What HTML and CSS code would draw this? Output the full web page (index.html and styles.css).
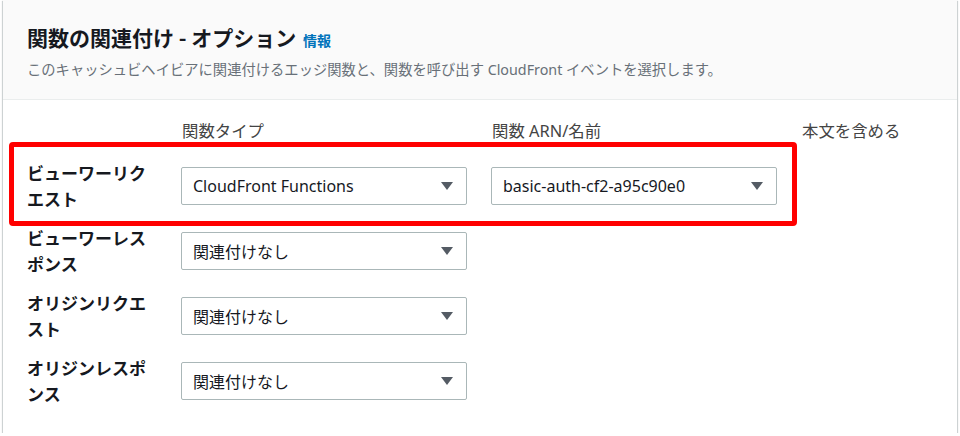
FILE: index.html
```html
<!DOCTYPE html>
<html>
  <head>
    <meta charset="utf-8">
    <title>関数の関連付け</title>
    <link rel="stylesheet" href="styles.css">
  </head>
  <body>
    <div class="card">
      <div class="card-header">
        <h2>関数の関連付け - オプション <a class="info" href="#">情報</a></h2>
        <p class="desc">このキャッシュビヘイビアに関連付けるエッジ関数と、関数を呼び出す CloudFront イベントを選択します。</p>
      </div>
      <div class="card-body">
        <div class="assoc">
          <div class="col-head"></div>
          <div class="col-head">関数タイプ</div>
          <div class="col-head">関数 ARN/名前</div>
          <div class="col-head">本文を含める</div>

          <div class="event">ビューワーリクエスト</div>
          <div class="select"><span>CloudFront Functions</span><i class="caret"></i></div>
          <div class="select"><span>basic-auth-cf2-a95c90e0</span><i class="caret"></i></div>
          <div></div>

          <div class="event">ビューワーレスポンス</div>
          <div class="select"><span>関連付けなし</span><i class="caret"></i></div>
          <div></div>
          <div></div>

          <div class="event">オリジンリクエスト</div>
          <div class="select"><span>関連付けなし</span><i class="caret"></i></div>
          <div></div>
          <div></div>

          <div class="event">オリジンレスポンス</div>
          <div class="select"><span>関連付けなし</span><i class="caret"></i></div>
          <div></div>
          <div></div>
        </div>
      </div>
      <div class="highlight"></div>
    </div>
  </body>
</html>
```

FILE: styles.css
```css
body {
  margin: 0;
  background: #fff;
  font-family: "Noto Sans", "Noto Sans CJK JP", sans-serif;
  color: #16191f;
}
.card {
  position: relative;
  margin: 0 3px;
  height: 433px;
  background: #fff;
  box-shadow: 0 1px 1px 0 rgba(0,28,36,.3), 1px 1px 1px 0 rgba(0,28,36,.15), -1px 1px 1px 0 rgba(0,28,36,.15);
}
.card-header {
  background: #fafafa;
  border-bottom: 1px solid #eaeded;
  padding: 23px 24px 0;
  height: 76px;
}
.card-header h2 {
  margin: 0;
  font-size: 21px;
  line-height: 28px;
  font-weight: bold;
  font-family: "Noto Sans CJK JP", sans-serif;
}
.card-header .info {
  font-size: 14px;
  color: #0073bb;
  text-decoration: none;
  margin-left: 2px;
}
.card-header .desc {
  margin: 6px 0 0;
  font-size: 14.3px;
  line-height: 20px;
  color: #687078;
}
.card-body {
  padding: 20px 24px 0;
}
.assoc {
  display: grid;
  grid-template-columns: 130px 286px 286px auto;
  column-gap: 24px;
  row-gap: 13px;
  align-items: center;
}
.col-head {
  font-size: 16.4px;
  line-height: 22px;
  color: #444;
  margin-bottom: 5px;
  padding-left: 1px;
}
.event {
  font-family: "Noto Sans CJK JP", sans-serif;
  font-weight: bold;
  font-size: 17px;
  line-height: 26px;
}
.select {
  display: flex;
  align-items: center;
  justify-content: space-between;
  height: 38px;
  box-sizing: border-box;
  border: 1px solid #aab7b8;
  border-radius: 2px;
  padding: 0 13px 0 11px;
  font-size: 16px;
  color: #16191f;
  background: #fff;
}
.caret {
  width: 0;
  height: 0;
  border-left: 6px solid transparent;
  border-right: 6px solid transparent;
  border-top: 8px solid #545b64;
}
.highlight {
  position: absolute;
  left: 6px;
  top: 142px;
  width: 788px;
  height: 84px;
  box-sizing: border-box;
  border: 5px solid #ff0000;
  border-radius: 4px;
}
```
